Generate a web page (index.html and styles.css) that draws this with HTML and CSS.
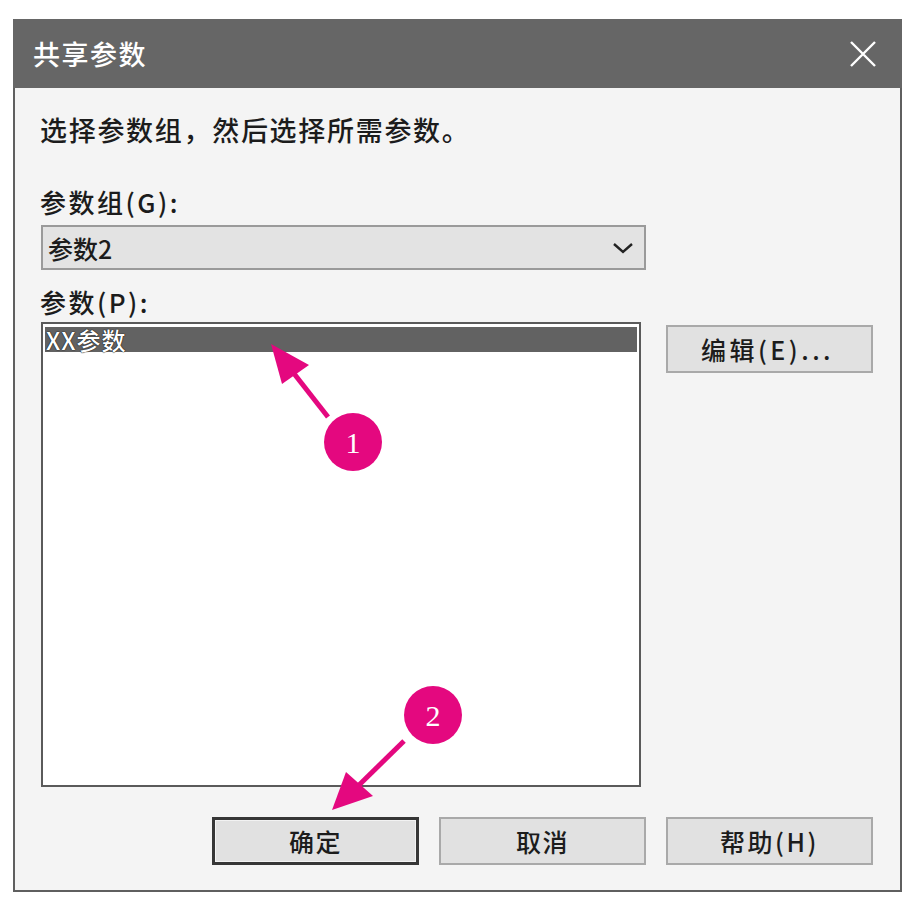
FILE: index.html
```html
<!DOCTYPE html>
<html lang="zh-CN">

<head>
    <meta charset="UTF-8" />
    <title>共享参数</title>
    <link rel="stylesheet" href="styles.css">
</head>

<body>
    <div class="page">
        <div class="dialog">
            <div class="titlebar">
                <span class="title">共享参数</span>
                <svg class="close" width="28" height="28" viewBox="0 0 28 28">
                    <path d="M2 2 L26 26 M26 2 L2 26" stroke="#fff" stroke-width="2.4" fill="none" />
                </svg>
            </div>

            <div class="content">
                <p class="intro">选择参数组，然后选择所需参数。</p>

                <label class="field-label">参数组(G):</label>
                <div class="combo">
                    <span>参数2</span>
                    <svg width="22" height="12" viewBox="0 0 22 12">
                        <path d="M2 2 L11 10 L20 2" stroke="#222" stroke-width="2.4" fill="none" />
                    </svg>
                </div>

                <label class="field-label second">参数(P):</label>
                <div class="list-row">
                    <div class="listbox">
                        <div class="list-item selected">XX参数</div>
                    </div>
                    <button class="btn edit-btn">编辑(E)...</button>
                </div>

                <div class="actions">
                    <button class="btn default">确定</button>
                    <button class="btn">取消</button>
                    <button class="btn wide-text">帮助(H)</button>
                </div>
            </div>
        </div>

        <!-- callouts drawn on top of the dialog -->
        <svg class="callouts" width="914" height="908" viewBox="0 0 914 908">
            <line x1="328" y1="417" x2="292" y2="371" stroke="#e4087f" stroke-width="5" />
            <polygon points="271,344 282,384 309,365" fill="#e4087f" />
            <circle cx="353" cy="442" r="29" fill="#e4087f" />
            <text x="353" y="453" class="num">1</text>

            <line x1="404" y1="741" x2="356" y2="788" stroke="#e4087f" stroke-width="5" />
            <polygon points="332,810 346,772 373,796" fill="#e4087f" />
            <circle cx="433" cy="715" r="29" fill="#e4087f" />
            <text x="433" y="726" class="num">2</text>
        </svg>
    </div>
</body>

</html>
```

FILE: styles.css
```css
body {
    margin: 0;
    background-color: #ffffff;
    font-family: "Noto Sans CJK SC", sans-serif;
    color: #1c1c1c;
}

.page {
    position: relative;
    width: 914px;
    height: 908px;
    padding: 19px 0 0 13px;
    box-sizing: border-box;
}

.dialog {
    width: 889px;
    display: flex;
    flex-direction: column;
}

.titlebar {
    height: 69px;
    background-color: #666666;
    display: flex;
    align-items: center;
    justify-content: space-between;
    padding: 0 25px 0 20px;
    color: #ffffff;
}

.title {
    font-size: 27px;
    font-weight: 500;
    letter-spacing: 1.5px;
}

.content {
    background-color: #f4f4f4;
    border: 2px solid #5f5f5f;
    border-top: none;
    padding: 0 27px 25px 26px;
    display: flex;
    flex-direction: column;
}

.intro {
    margin: 24px 0 0 -1px;
    font-size: 27px;
    font-weight: 500;
    line-height: 36px;
    letter-spacing: 1.7px;
}

.field-label {
    display: block;
    margin: 38px 0 0 -1px;
    font-size: 26px;
    font-weight: 500;
    line-height: 32px;
    letter-spacing: 2.5px;
}

.field-label.second {
    margin-top: 16px;
}

.combo {
    margin-top: 7px;
    width: 605px;
    height: 45px;
    box-sizing: border-box;
    background-color: #e3e3e3;
    border: 2px solid #9a9a9a;
    display: flex;
    align-items: center;
    justify-content: space-between;
    padding: 0 10px 0 5px;
    font-size: 25px;
    font-weight: 500;
}

.list-row {
    margin-top: 4px;
    display: flex;
    justify-content: space-between;
    align-items: flex-start;
}

.listbox {
    width: 600px;
    height: 465px;
    box-sizing: border-box;
    background-color: #ffffff;
    border: 2px solid #5a5a5a;
    padding: 3px 2px;
}

.list-item {
    height: 25px;
    line-height: 25px;
    font-size: 24px;
    font-weight: 500;
    letter-spacing: 1px;
    padding-left: 1px;
}

.list-item.selected {
    background-color: #626262;
    color: #ffffff;
    text-shadow: 0 0 1px #000, 0 0 1px #000;
}

.btn {
    width: 207px;
    height: 48px;
    box-sizing: border-box;
    background-color: #e1e1e1;
    border: 2px solid #a9a9a9;
    font-family: "Noto Sans CJK SC", sans-serif;
    font-size: 25px;
    font-weight: 500;
    color: #1c1c1c;
    padding: 0;
    letter-spacing: 1.5px;
}

.edit-btn {
    margin-top: 3px;
    letter-spacing: 3.5px;
    padding-right: 4px;
}

.btn.wide-text {
    letter-spacing: 2.5px;
}

.actions {
    margin-top: 30px;
    display: flex;
    justify-content: flex-end;
    gap: 20px;
}

.btn.default {
    border: 3px solid #363636;
    box-shadow: inset 0 0 0 1px #f2f2f2;
}

.callouts {
    position: absolute;
    top: 0;
    left: 0;
    pointer-events: none;
}

.num {
    font-family: "Liberation Serif", serif;
    font-size: 30px;
    fill: #ffffff;
    text-anchor: middle;
}
```
